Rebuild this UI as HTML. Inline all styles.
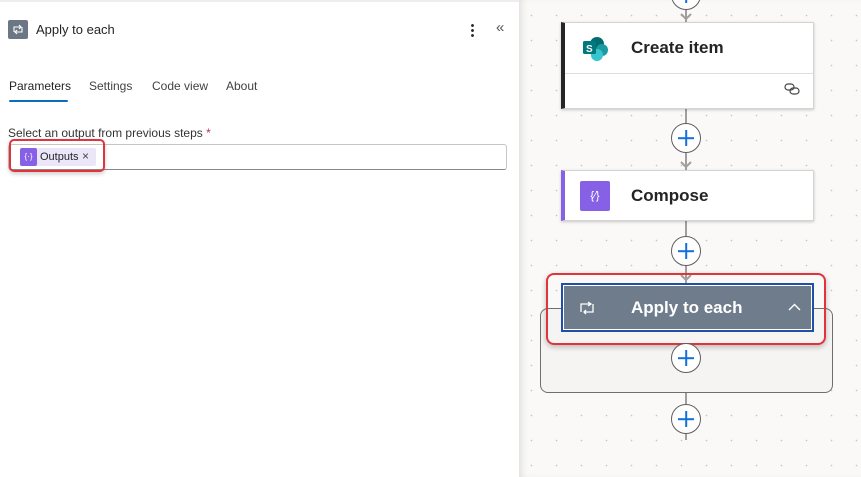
<!DOCTYPE html><html><head><style>
*{margin:0;padding:0;box-sizing:border-box}
body{width:861px;height:477px;overflow:hidden;font-family:"Liberation Sans",sans-serif;position:relative;background:#fff}
.a{position:absolute}
#canvas{left:519px;top:0;width:342px;height:477px;background-color:#faf9f8;background-image:radial-gradient(circle,#c8c6c4 0.6px,transparent 1px);background-size:25px 25px;background-position:0px 3px;box-shadow:inset 6px 0 8px -4px rgba(0,0,0,.12)}
.card{background:#fff;border:1px solid #d6d4d2;box-shadow:0 1px 3px rgba(0,0,0,.2)}
.plus{width:30px;height:30px;border:1.5px solid #605e5c;border-radius:50%;background:#fff}
.plus:before,.plus:after{content:"";position:absolute;background:#1470d8;left:50%;top:50%}
.plus:before{width:16px;height:1.6px;transform:translate(-50%,-50%)}
.plus:after{width:1.6px;height:16px;transform:translate(-50%,-50%)}
.line{width:2px;background:#a19f9d}
.tab{top:79px;font-size:12px;color:#424242}
.arr{width:12px;height:8px}
</style></head><body>
<div class="a" style="left:0;top:0;width:519px;height:2px;background:#eee"></div>
<div class="a" style="left:8px;top:20px;width:20px;height:19px;background:#6b7785;border-radius:2px"></div>
<svg class="a" style="left:12px;top:24px" width="12" height="11" viewBox="0 0 12 11"><path d="M2 8V3h7M7 1l2 2-2 2M10 3v5H3M5 10 3 8l2-2" stroke="#fff" stroke-width="1.1" fill="none"/></svg>
<div class="a" style="left:36px;top:22px;font-size:13px;color:#242424">Apply to each</div>
<div class="a" style="left:471px;top:23px;width:3px;height:14px;background:radial-gradient(circle,#333 1.3px,transparent 1.6px) 0 0/3px 5px"></div>
<div class="a" style="left:496px;top:19px;font-size:15px;color:#555">«</div>
<div class="a tab" style="left:9px;color:#242424">Parameters</div>
<div class="a tab" style="left:89px">Settings</div>
<div class="a tab" style="left:152px">Code view</div>
<div class="a tab" style="left:226px">About</div>
<div class="a" style="left:9px;top:100px;width:59px;height:2px;background:#0f6cbd;border-radius:1px"></div>
<div class="a" style="left:8px;top:126px;font-size:12px;color:#333">Select an output from previous steps <span style="color:#c4314b">*</span></div>
<div class="a" style="left:8px;top:144px;width:499px;height:26px;border:1px solid #c8c6c4;border-bottom-color:#888;border-radius:3px"></div>
<div class="a" style="left:9px;top:139px;width:96px;height:33px;border:2px solid #e0343d;border-radius:5px;box-shadow:0 2px 4px rgba(0,0,0,.2)"></div>
<div class="a" style="left:20px;top:148px;width:76px;height:18px;background:#ebe7f8;border-radius:2px"></div>
<div class="a" style="left:20px;top:148px;width:17px;height:18px;background:#8661e6;border-radius:2px;color:#fff;font-size:8px;text-align:center;line-height:18px">{·}</div>
<div class="a" style="left:40px;top:151px;font-size:11px;color:#242424">Outputs</div>
<div class="a" style="left:82px;top:149px;font-size:12px;color:#444">×</div>

<div class="a" id="canvas"></div>
<div class="a line" style="left:685px;top:0;height:440px"></div>
<div class="a plus" style="left:671px;top:-20px"></div>
<svg class="a arr" style="left:680px;top:13px" viewBox="0 0 12 8"><path d="M1 1l5 5 5-5" stroke="#a19f9d" stroke-width="2" fill="none"/></svg>
<svg class="a arr" style="left:680px;top:161px" viewBox="0 0 12 8"><path d="M1 1l5 5 5-5" stroke="#a19f9d" stroke-width="2" fill="none"/></svg>
<svg class="a arr" style="left:680px;top:274px" viewBox="0 0 12 8"><path d="M1 1l5 5 5-5" stroke="#a19f9d" stroke-width="2" fill="none"/></svg>
<div class="a card" style="left:561px;top:22px;width:253px;height:87px;border-left:4px solid #252525"></div>
<div class="a" style="left:565px;top:73px;width:248px;height:1px;background:#e1dfdd"></div>
<svg class="a" style="left:582px;top:35px" width="27" height="27" viewBox="0 0 27 27"><circle cx="15" cy="9" r="7" fill="#036c70"/><circle cx="20" cy="15" r="6" fill="#1a9ba1"/><circle cx="15" cy="20" r="6" fill="#37c6d0"/><rect x="1" y="6" width="13" height="13" rx="1.5" fill="#03787c"/><text x="4" y="17" font-size="10" font-weight="bold" fill="#fff" font-family="Liberation Sans">S</text></svg>
<div class="a" style="left:631px;top:38px;font-size:17px;font-weight:bold;color:#242424">Create item</div>
<svg class="a" style="left:784px;top:83px" width="17" height="12" viewBox="0 0 17 12"><rect x="1" y="1" width="9" height="6" rx="3" fill="none" stroke="#444" stroke-width="1.2"/><rect x="6" y="5" width="9" height="6" rx="3" fill="none" stroke="#444" stroke-width="1.2"/></svg>
<div class="a plus" style="left:671px;top:123px"></div>
<div class="a card" style="left:561px;top:170px;width:253px;height:51px;border-left:4px solid #8661e6"></div>
<div class="a" style="left:580px;top:181px;width:30px;height:30px;background:#8661e6;border-radius:2px;color:#fff;font-size:11px;text-align:center;line-height:30px">{∕}</div>
<div class="a" style="left:631px;top:186px;font-size:17px;font-weight:bold;color:#242424">Compose</div>
<div class="a plus" style="left:671px;top:236px"></div>
<div class="a" style="left:540px;top:308px;width:293px;height:85px;border:1.5px solid #706e6c;border-radius:8px;background:#f5f4f3"></div>
<div class="a" style="left:546px;top:273px;width:280px;height:72px;border:2px solid #e0343d;border-radius:8px;box-shadow:0 2px 6px rgba(0,0,0,.25)"></div>
<div class="a" style="left:561px;top:283px;width:253px;height:49px;background:#6f7c8c;border:2px solid #1f4fa8;box-shadow:inset 0 0 0 1px #fff"></div>
<svg class="a" style="left:579px;top:301px" width="17" height="14" viewBox="0 0 17 14"><path d="M2 11V3h10M9 1l3 2-3 2M14 3v8H5M7 13l-2-2 2-2" stroke="#fff" stroke-width="1.3" fill="none"/></svg>
<div class="a" style="left:631px;top:298px;font-size:17px;font-weight:bold;color:#fff">Apply to each</div>
<svg class="a" style="left:787px;top:302px" width="15" height="10" viewBox="0 0 15 10"><path d="M2 8l5.5-5.5L13 8" stroke="#fff" stroke-width="1.4" fill="none"/></svg>
<div class="a plus" style="left:671px;top:343px"></div>
<div class="a plus" style="left:671px;top:404px"></div>
</body></html>
